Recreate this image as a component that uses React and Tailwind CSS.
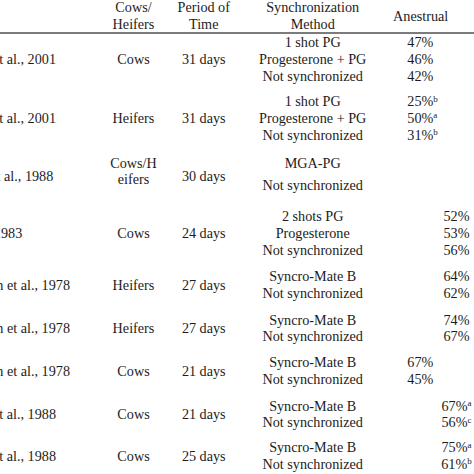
import React from "react";

const rows = [
  {
    author: "Stevenson et al., 2001",
    end: "w-[56px]",
    kind: ["Cows"],
    period: "31 days",
    methods: ["1 shot PG", "Progesterone + PG", "Not synchronized"],
    vals: [["47%"], ["46%"], ["42%"]],
    col: 5,
    mt: "mt-[0.5px]",
  },
  {
    author: "Stevenson et al., 2001",
    end: "w-[56px]",
    kind: ["Heifers"],
    period: "31 days",
    methods: ["1 shot PG", "Progesterone + PG", "Not synchronized"],
    vals: [["25%", "b"], ["50%", "a"], ["31%", "b"]],
    col: 5,
    mt: "mt-[8.9px]",
  },
  {
    special: true,
    author: "Odde et al., 1988",
    end: "w-[53.3px]",
    kind: ["Cows/H", "eifers"],
    period: "30 days",
    methods: ["MGA-PG", "Not synchronized"],
    vals: [],
    col: 5,
    mt: "mt-[11.2px]",
  },
  {
    author: "King et al., 1983",
    end: "w-[22.3px]",
    kind: ["Cows"],
    period: "24 days",
    methods: ["2 shots PG", "Progesterone", "Not synchronized"],
    vals: [["52%"], ["53%"], ["56%"]],
    col: 6,
    mt: "mt-[15px]",
  },
  {
    author: "Brown et al., 1978",
    end: "w-[70px]",
    kind: ["Heifers"],
    period: "27 days",
    methods: ["Syncro-Mate B", "Not synchronized"],
    vals: [["64%"], ["62%"]],
    col: 6,
    mt: "mt-[9.9px]",
  },
  {
    author: "Brown et al., 1978",
    end: "w-[70px]",
    kind: ["Heifers"],
    period: "27 days",
    methods: ["Syncro-Mate B", "Not synchronized"],
    vals: [["74%"], ["67%"]],
    col: 6,
    mt: "mt-[9.9px]",
  },
  {
    author: "Brown et al., 1978",
    end: "w-[70px]",
    kind: ["Cows"],
    period: "21 days",
    methods: ["Syncro-Mate B", "Not synchronized"],
    vals: [["67%"], ["45%"]],
    col: 5,
    mt: "mt-[9.3px]",
  },
  {
    author: "Lemaster et al., 1988",
    end: "w-[56px]",
    kind: ["Cows"],
    period: "21 days",
    methods: ["Syncro-Mate B", "Not synchronized"],
    vals: [["67%", "a"], ["56%", "c"]],
    col: 6,
    mt: "mt-[9.9px]",
  },
  {
    author: "Lemaster et al., 1988",
    end: "w-[56px]",
    kind: ["Cows"],
    period: "25 days",
    methods: ["Syncro-Mate B", "Not synchronized"],
    vals: [["75%", "a"], ["61%", "b"]],
    col: 6,
    mt: "mt-[8.3px]",
  },
];

const grid = "grid grid-cols-[99.5px_68px_72.5px_145.4px_53.6px_35px]";

function Val({ v }) {
  if (!v) return <div className="h-[16.7px]" />;
  return (
    <div className="whitespace-nowrap">
      {v[0]}
      {v[1] ? <sup className="text-[9px]">{v[1]}</sup> : null}
    </div>
  );
}

function Row({ r }) {
  const align = r.special ? "items-start" : "items-center";
  const offset = r.special ? "mt-[13.7px]" : "";
  return (
    <div className={`${grid} ${align} ${r.mt}`}>
      <div className={`flex ${offset}`}>
        <div className={`${r.end} flex justify-end whitespace-nowrap`}>
          <span>{r.author}</span>
        </div>
      </div>
      <div className="flex flex-col items-center text-center">
        {r.kind.map((k, i) => (
          <div key={i} className="whitespace-nowrap">
            {k}
          </div>
        ))}
      </div>
      <div className={`text-center whitespace-nowrap ${offset}`}>{r.period}</div>
      <div className="flex flex-col items-center text-center">
        {r.methods.map((m, i) => (
          <div
            key={i}
            className={`whitespace-nowrap ${r.special && i === 1 ? "mt-[5.3px]" : ""}`}
          >
            {m}
          </div>
        ))}
      </div>
      <div className="flex flex-col pl-[21.9px]">
        {r.col === 5 && r.vals.map((v, i) => <Val key={i} v={v} />)}
      </div>
      <div className="flex flex-col items-center">
        {r.col === 6 && r.vals.map((v, i) => <Val key={i} v={v} />)}
      </div>
    </div>
  );
}

export default function App() {
  return (
    <div className="w-[474px] h-[474px] overflow-hidden bg-white text-[#1c1c1c] font-['Liberation_Serif','Times_New_Roman',serif] text-[14.2px] leading-[16.7px]">
      <div className={`${grid} items-center -mt-[1.2px] h-[34.9px] border-b-2 border-[#7c7c7c]`}>
        <div />
        <div className="flex flex-col items-center text-center">
          <div>Cows/</div>
          <div>Heifers</div>
        </div>
        <div className="flex flex-col items-center text-center whitespace-nowrap">
          <div>Period of</div>
          <div>Time</div>
        </div>
        <div className="flex flex-col items-center text-center">
          <div>Synchronization</div>
          <div>Method</div>
        </div>
        <div className="col-span-2 pl-[7.7px] pt-[1.3px] whitespace-nowrap">Anestrual</div>
      </div>
      {rows.map((r, i) => (
        <Row key={i} r={r} />
      ))}
    </div>
  );
}
